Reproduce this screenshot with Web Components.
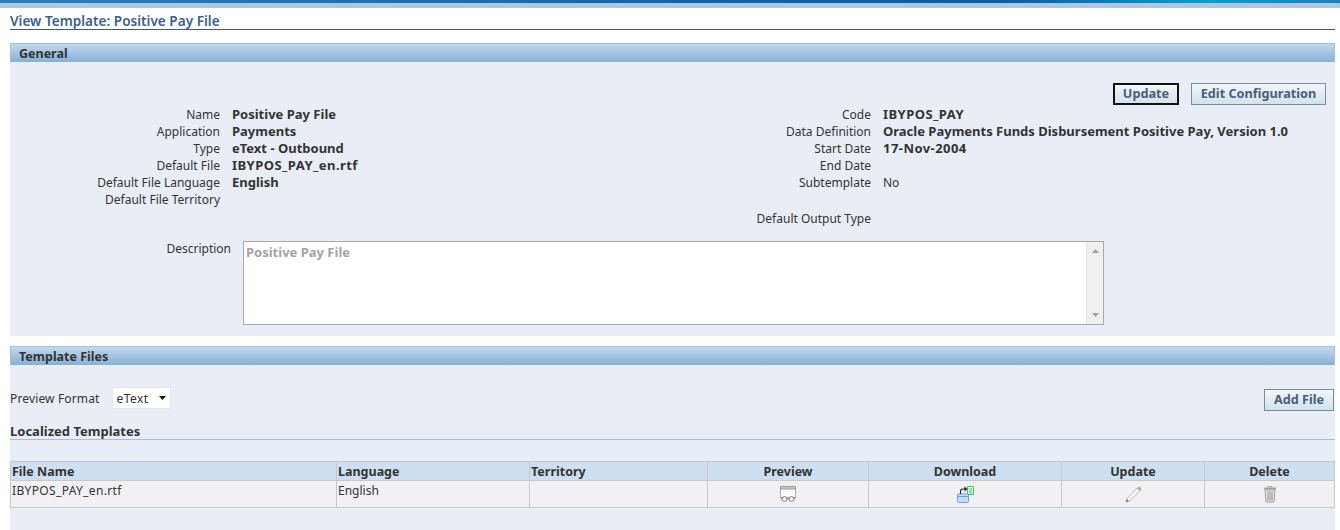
<!DOCTYPE html>
<html lang="en">
<head>
<meta charset="utf-8">
<title>View Template: Positive Pay File</title>
<style>
  html, body { margin: 0; padding: 0; background: #fff; }
  body { font-family: "Noto Sans", "DejaVu Sans", sans-serif; font-size: 12px; color: #333; height: 530px; overflow: hidden; }
</style>
</head>
<body>
<page-shell>
  <page-title>View Template: Positive Pay File</page-title>

  <section-panel heading="General" style="--body-height:274px">
    <general-info></general-info>
  </section-panel>

  <section-panel heading="Template Files" style="--gap-top:10px;--body-height:165px">
    <template-files></template-files>
  </section-panel>
</page-shell>

<script>
const baseFont = `font-family: "Noto Sans", "DejaVu Sans", sans-serif; font-size: 12px;`
const boldFont = `font-family: "Noto Sans", "DejaVu Sans", sans-serif; font-size: 13px; font-weight: 700;`

customElements.define('page-shell', class extends HTMLElement {
  constructor() {
    super()
    this.attachShadow({ mode: 'open' }).innerHTML = `
      <style>
        :host { display: block; ${baseFont} }
        .brand { height: 3px; background: linear-gradient(90deg, #2a7fc0 0, #1c72b8 25%, #0d5fad 60%, #0a5ca8 75%, #00a0d8 90%, #1a80c4 100%); }
        .sub { height: 5px; background: #adc7e2; }
        .content { padding: 0 5px 0 10px; }
      </style>
      <div class="brand"></div>
      <div class="sub"></div>
      <div class="content"><slot></slot></div>
    `
  }
})

customElements.define('page-title', class extends HTMLElement {
  constructor() {
    super()
    this.attachShadow({ mode: 'open' }).innerHTML = `
      <style>
        :host {
          display: block;
          height: 21px;
          line-height: 25px;
          margin-bottom: 13px;
          box-sizing: content-box;
          border-bottom: 1px solid #3c5a8a;
          color: #3c6090;
          font-weight: 600;
          font-size: 13.6px;
        }
      </style>
      <slot></slot>
    `
  }
})

customElements.define('section-panel', class extends HTMLElement {
  constructor() {
    super()
    this.attachShadow({ mode: 'open' }).innerHTML = `
      <style>
        :host { display: block; margin-top: var(--gap-top, 0); }
        .head {
          height: 18px;
          line-height: 19px;
          padding-left: 8px;
          border: 1px solid #a3c0da;
          border-width: 1px 1px 0;
          background: linear-gradient(#c4d8ec, #86b0d6);
          color: #333;
          ${boldFont}
          font-size: 12.5px;
        }
        .body { background: #e9eef6; height: var(--body-height); }
      </style>
      <div class="head"></div>
      <div class="body"><slot></slot></div>
    `
    this.shadowRoot.querySelector('.head').textContent = this.getAttribute('heading')
  }
})

customElements.define('oa-button', class extends HTMLElement {
  constructor() {
    super()
    this.attachShadow({ mode: 'open' }).innerHTML = `
      <style>
        :host {
          display: inline-block;
          box-sizing: border-box;
          height: 22px;
          line-height: 19px;
          padding: 0 8px;
          border: 1px solid #7d8ba0;
          background: linear-gradient(#f2f6f9, #cfe4ec);
          color: #4c5c80;
          text-align: center;
          white-space: nowrap;
          ${boldFont}
          font-size: 12.7px;
        }
        :host([primary]) { border: 2px solid #111; line-height: 17px; }
      </style>
      <slot></slot>
    `
  }
})

customElements.define('field-row', class extends HTMLElement {
  constructor() {
    super()
    this.attachShadow({ mode: 'open' }).innerHTML = `
      <style>
        :host { display: grid; grid-template-columns: var(--label-width) 1fr; column-gap: 12px; height: 17px; line-height: 17px; white-space: nowrap; }
        .label { text-align: right; }
        .value { ${boldFont} }
        :host([wide]) .value { letter-spacing: 0.45px; }
        :host([plain]) .value { ${baseFont} font-weight: 400; }
      </style>
      <div class="label"></div>
      <div class="value"><slot></slot></div>
    `
    this.shadowRoot.querySelector('.label').textContent = this.getAttribute('label')
  }
})

customElements.define('general-info', class extends HTMLElement {
  constructor() {
    super()
    this.attachShadow({ mode: 'open' }).innerHTML = `
      <style>
        :host { display: block; padding-top: 21px; }
        .actions { display: flex; justify-content: flex-end; gap: 12px; padding-right: 9px; height: 22px; }
        .actions oa-button:first-child { width: 66px; padding: 0; }
        .actions oa-button:last-child { width: 135px; padding: 0; }
        .columns { display: grid; grid-template-columns: 651px 1fr; margin-top: 1px; --label-width: 210px; height: 132px; }
        .desc { display: grid; grid-template-columns: 221px 861px; column-gap: 12px; margin-top: 3px; }
        .desc-label { text-align: right; line-height: 15px; }
        .box {
          box-sizing: border-box;
          width: 861px;
          height: 84px;
          border: 1px solid #a9a9a9;
          background: #fff;
          display: flex;
        }
        .text { flex: 1; padding: 3px 2px; color: #a3a3a3; line-height: 14px; ${boldFont} }
        .scroll {
          width: 16px;
          background: #f0f0f0;
          border-left: 1px solid #e4e4e4;
          display: flex;
          flex-direction: column;
          justify-content: space-between;
          align-items: center;
          padding: 7px 0;
        }
        .scroll svg { display: block; }
      </style>
      <div class="actions">
        <oa-button primary>Update</oa-button>
        <oa-button>Edit Configuration</oa-button>
      </div>
      <div class="columns">
        <div class="left">
          <field-row label="Name">Positive Pay File</field-row>
          <field-row label="Application">Payments</field-row>
          <field-row label="Type">eText - Outbound</field-row>
          <field-row label="Default File" wide>IBYPOS_PAY_en.rtf</field-row>
          <field-row label="Default File Language">English</field-row>
          <field-row label="Default File Territory"></field-row>
        </div>
        <div class="right">
          <field-row label="Code" wide>IBYPOS_PAY</field-row>
          <field-row label="Data Definition">Oracle Payments Funds Disbursement Positive Pay, Version 1.0</field-row>
          <field-row label="Start Date" wide>17-Nov-2004</field-row>
          <field-row label="End Date"></field-row>
          <field-row label="Subtemplate" plain>No</field-row>
          <div style="height:19px"></div>
          <field-row label="Default Output Type"></field-row>
        </div>
      </div>
      <div class="desc">
        <div class="desc-label">Description</div>
        <div class="box">
          <div class="text">Positive Pay File</div>
          <div class="scroll">
            <svg width="7" height="4" viewBox="0 0 7 4"><path d="M3.500 0 7 4H0z" fill="#a0a0a0"/></svg>
            <svg width="7" height="4" viewBox="0 0 7 4"><path d="M0 0H7L3.500 4z" fill="#a0a0a0"/></svg>
          </div>
        </div>
      </div>
    `
  }
})

customElements.define('template-files', class extends HTMLElement {
  constructor() {
    super()
    this.attachShadow({ mode: 'open' }).innerHTML = `
      <style>
        :host { display: block; padding-top: 22px; }
        .top { display: flex; align-items: flex-start; justify-content: space-between; height: 22px; }
        .format { display: flex; align-items: center; height: 22px; letter-spacing: 0.15px; }
        .select {
          box-sizing: border-box;
          width: 59px;
          height: 22px;
          margin-left: 12px;
          padding: 0 4px;
          background: #fff;
          border: 1px solid #e4e8ee;
          display: flex;
          align-items: center;
          justify-content: space-between;
          letter-spacing: 0.4px;
        }
        oa-button { margin-top: 2px; margin-right: 1px; width: 70px; padding: 0; }
        h3 {
          margin: 13px 0 0;
          height: 17px;
          line-height: 18px;
          color: #333;
          border-bottom: 1px solid #a3c0da;
          ${boldFont}
        }
        data-table { margin-top: 21px; }
      </style>
      <div class="top">
        <div class="format">Preview Format
          <div class="select">eText <svg width="7" height="4" viewBox="0 0 7 4"><path d="M0 0H7L3.500 4z" fill="#111"/></svg></div>
        </div>
        <oa-button>Add File</oa-button>
      </div>
      <h3>Localized Templates</h3>
      <data-table></data-table>
    `
  }
})

const icons = {
  preview: `<svg width="17" height="17" viewBox="0 0 17 17" fill="none">
    <rect x="0.500" y="0.500" width="15" height="11" fill="#fbfbfb" stroke="#b0b0b0"/>
    <rect x="0.500" y="0.500" width="15" height="2.500" fill="#c4c4c4" stroke="#a0a0a0"/>
    <circle cx="4.500" cy="13" r="2.500" fill="#f1f1f4" stroke="#808080"/>
    <circle cx="11.500" cy="13" r="2.500" fill="#f1f1f4" stroke="#808080"/>
    <path d="M7 13h2M2 13 .5 11.500M14 13 15.500 11.500" stroke="#808080"/>
  </svg>`,
  download: `<svg width="17" height="17" viewBox="0 0 17 17" fill="none">
    <rect x="10.500" y="0.500" width="6" height="8" fill="#e6fbe8" stroke="#3fce5c"/>
    <path d="M12 3h3M12 5h3M12 7h3" stroke="#3fce5c"/>
    <rect x="0.500" y="8" width="11" height="8.500" rx="1" fill="#c8dcf8" stroke="#6f9ae8"/>
    <path d="M0.500 10.500h11" stroke="#6f9ae8"/>
    <path d="M3.500 8V5.500Q3.500 3 6 3h2" stroke="#222" stroke-width="1.100"/>
    <path d="M7.500 0.500 10.500 3 7.500 5.500z" fill="#222"/>
  </svg>`,
  update: `<svg width="17" height="17" viewBox="0 0 17 17" fill="none">
    <path d="M1 16 2 12.500 12.500 2 15 4.500 4.500 15z" fill="#fbfbfb" stroke="#b4b4b4"/>
    <path d="M12.500 2 15 4.500 16 3 14.500 1z" fill="#a8a8a8" stroke="#a8a8a8"/>
    <path d="M1 16 2 13 4 15z" fill="#777"/>
  </svg>`,
  delete: `<svg width="14" height="17" viewBox="0 0 14 17" fill="none">
    <path d="M1 2.500h12" stroke="#a0a0a0" stroke-width="2"/>
    <path d="M5 1.500V.5H9V1.500" stroke="#a0a0a0"/>
    <path d="M2 4 3 16H11L12 4z" fill="#e6e6e6" stroke="#a0a0a0"/>
    <path d="M5 5.500V14.500M7 5.500V14.500M9 5.500V14.500" stroke="#909090"/>
  </svg>`
}

customElements.define('data-table', class extends HTMLElement {
  constructor() {
    super()
    this.attachShadow({ mode: 'open' }).innerHTML = `
      <style>
        :host { display: block; }
        table { border-collapse: collapse; table-layout: fixed; width: 1325px; }
        th, td { border: 1px solid #c4c8cf; padding: 0 1px; font-size: 12px; color: #333; }
        th { height: 17px; padding-top: 1px; background: #cddff0; text-align: left; line-height: 17px; ${boldFont} font-size: 12.5px; }
        td { height: 26px; background: #f1f1f4; vertical-align: top; line-height: 19px; }
        .file { letter-spacing: 0.35px; }
        .c { text-align: center; }
        td.c { vertical-align: middle; line-height: 0; }
        td.c svg { vertical-align: middle; }
      </style>
      <table>
        <colgroup>
          <col style="width:326px"><col style="width:193px"><col style="width:178px"><col style="width:161px">
          <col style="width:193px"><col style="width:143px"><col style="width:130px">
        </colgroup>
        <tr>
          <th>File Name</th><th>Language</th><th>Territory</th>
          <th class="c">Preview</th><th class="c">Download</th><th class="c">Update</th><th class="c">Delete</th>
        </tr>
        <tr>
          <td class="file">IBYPOS_PAY_en.rtf</td><td>English</td><td></td>
          <td class="c">${icons.preview}</td><td class="c">${icons.download}</td>
          <td class="c">${icons.update}</td><td class="c">${icons.delete}</td>
        </tr>
      </table>
    `
  }
})
</script>
</body>
</html>
